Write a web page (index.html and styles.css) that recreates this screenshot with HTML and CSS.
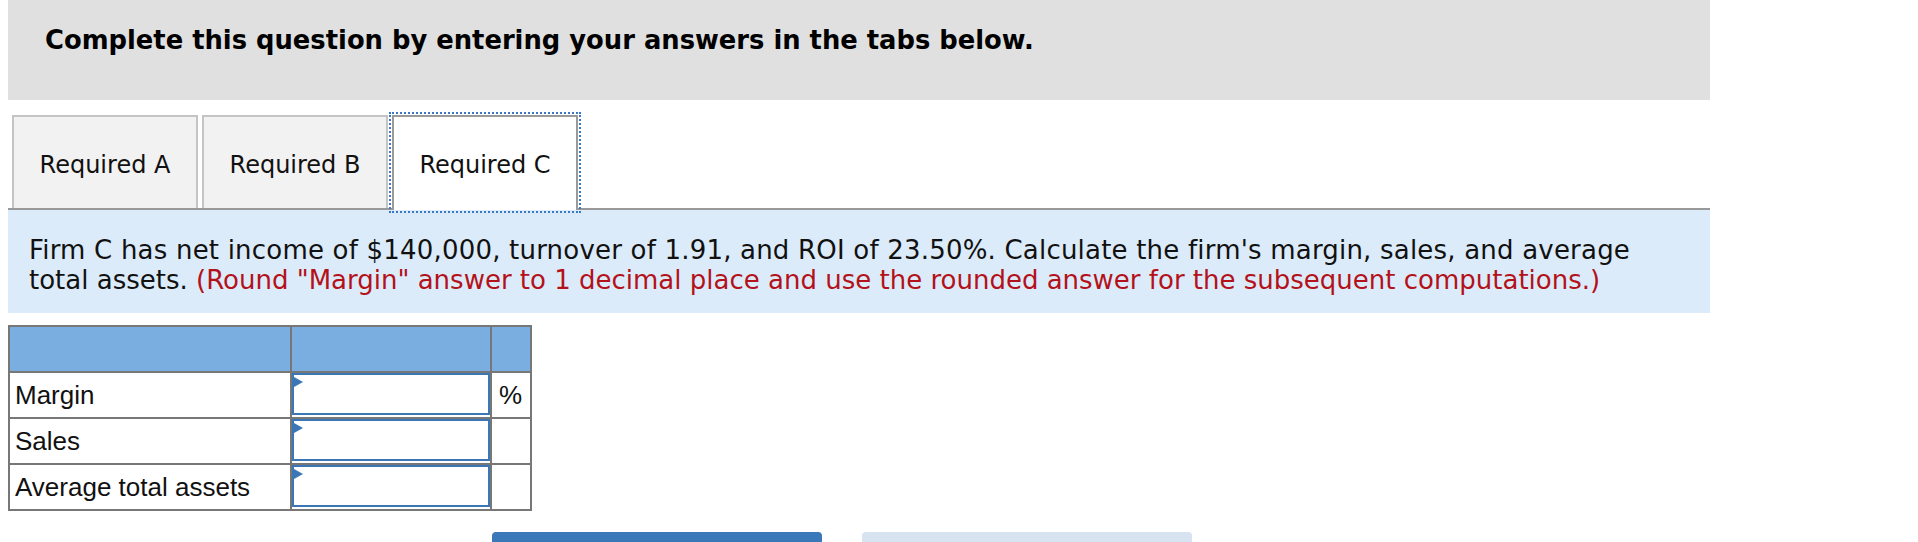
FILE: index.html
```html
<!DOCTYPE html>
<html lang="en">
<head>
<meta charset="utf-8">
<title>Required C</title>
<link rel="stylesheet" href="styles.css">
</head>
<body>
<div class="page">
  <div class="header">
    <h2 class="header-title">Complete this question by entering your answers in the tabs below.</h2>
  </div>
  <div class="tabs">
    <div class="tab">Required A</div>
    <div class="tab">Required B</div>
    <div class="tab active">Required C</div>
  </div>
  <div class="prompt">
    <p class="prompt-text"><span class="lead">Firm C has net income of $140,000, turnover of 1.91, and ROI of 23.50%. Calculate the firm's margin, sales, and average</span> total assets. <span class="hint">(Round "Margin" answer to 1 decimal place and use the rounded answer for the subsequent computations.)</span></p>
  </div>
  <div class="answer-grid">
    <div class="cell head"></div>
    <div class="cell head"></div>
    <div class="cell head"></div>

    <div class="cell label">Margin</div>
    <div class="cell input-cell"><div class="input"><span class="marker"></span></div></div>
    <div class="cell unit">%</div>

    <div class="cell label">Sales</div>
    <div class="cell input-cell"><div class="input"><span class="marker"></span></div></div>
    <div class="cell unit"></div>

    <div class="cell label">Average total assets</div>
    <div class="cell input-cell"><div class="input"><span class="marker"></span></div></div>
    <div class="cell unit"></div>
  </div>
  <div class="buttons">
    <div class="btn btn-prev"></div>
    <div class="btn btn-next"></div>
  </div>
</div>
</body>
</html>
```
FILE: styles.css
```css
html, body {
  margin: 0;
  padding: 0;
  background: #ffffff;
}

body {
  overflow: hidden;
}

.page {
  padding-left: 8px;
  width: 1702px;
}

.header {
  box-sizing: border-box;
  height: 100px;
  padding: 25px 0 0 37px;
  background: #e0e0e0;
}

.header-title {
  margin: 0;
  font-family: "DejaVu Sans", Verdana, sans-serif;
  font-weight: bold;
  font-size: 25.8px;
  line-height: 30px;
  color: #000;
}

.tabs {
  display: flex;
  gap: 4px;
  margin-top: 15px;
  padding-left: 4px;
  border-bottom: 2px solid #999999;
  align-items: flex-start;
}

.tab {
  box-sizing: border-box;
  width: 186px;
  height: 93px;
  padding-top: 34px;
  border: 2px solid #c4c4c4;
  border-bottom: none;
  background: #f2f2f2;
  font-family: "DejaVu Sans", Verdana, sans-serif;
  font-size: 24px;
  line-height: 28px;
  text-align: center;
  color: #111;
}

.tab.active {
  height: 95px;
  margin-bottom: -2px;
  background: #ffffff;
  border-color: #9a9a9a;
  outline: 2px dotted #3a78c3;
  outline-offset: 1px;
}

.prompt {
  padding: 25px 51px 18px 21px;
  background: #dcebf9;
}

.prompt-text {
  margin: 0;
  font-family: "DejaVu Sans", Verdana, sans-serif;
  font-size: 26px;
  line-height: 30px;
  color: #111;
}

.lead {
  letter-spacing: 0.2px;
}

.hint {
  color: #b3121b;
}

.answer-grid {
  display: grid;
  grid-template-columns: 280px 198px 38px;
  grid-template-rows: 44px 44px 44px 44px;
  gap: 2px;
  padding: 2px;
  width: 520px;
  margin-top: 12px;
  background: #777777;
}

.cell {
  background: #ffffff;
  font-family: "Liberation Sans", Arial, sans-serif;
  font-size: 26px;
  color: #111;
  display: flex;
  align-items: center;
}

.cell.head {
  background: #7aade0;
}

.cell.label {
  padding-left: 5px;
}

.cell.unit {
  padding-left: 7px;
}

.cell.input-cell {
  align-items: flex-start;
}

.input {
  position: relative;
  box-sizing: border-box;
  width: 198px;
  height: 42px;
  border: 2px solid #3b76b7;
  background: #ffffff;
}

.marker {
  position: absolute;
  left: 0;
  top: 2px;
  width: 0;
  height: 0;
  border-top: 5px solid transparent;
  border-bottom: 5px solid transparent;
  border-left: 9px solid #3b76b7;
}

.buttons {
  display: flex;
  gap: 40px;
  margin-top: 21px;
  padding-left: 484px;
}

.btn {
  width: 330px;
  height: 40px;
  border-radius: 4px 4px 0 0;
}

.btn-prev {
  background: #3b78b9;
}

.btn-next {
  background: #d7e3f1;
}
```
